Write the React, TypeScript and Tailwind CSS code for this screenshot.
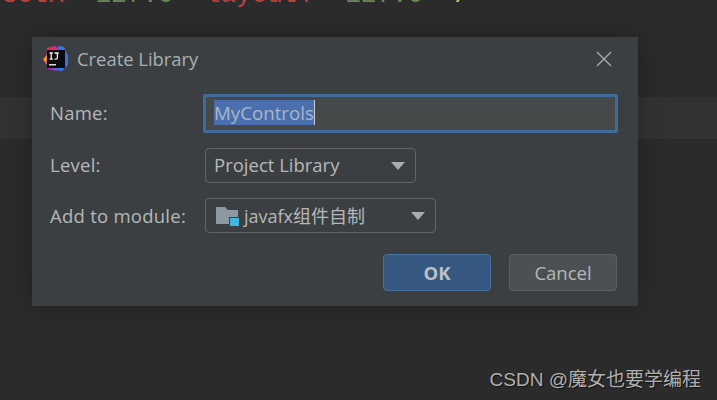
import { clsx } from "clsx";

const font = "[font-family:'Open_Sans','Noto_Sans_CJK_SC',sans-serif]";

function IdeaLogo() {
  return (
    <svg width="26" height="26" viewBox="0 0 26 26" className="shrink-0">
      <polygon points="4,2 12,0 17,4 8,22 4,21 3,13" fill="#e8256f" />
      <polygon points="0,13 4,9 6,16 3,18" fill="#f58a2b" />
      <polygon points="3,15 10,14 12,25 5,23" fill="#a82ba8" />
      <polygon points="15,0 21,1 25,10 25,19 19,25 11,24" fill="#3f6fe8" />
      <rect x="4" y="4" width="18" height="18" fill="#0b0b0b" />
      <rect x="6" y="18" width="7" height="1.5" fill="#d8d8d8" />
      <path d="M6.5 7h3.4M8.2 7v6.2M6.5 13.2h3.4" stroke="#f0f0f0" strokeWidth="1.3" fill="none" />
      <path d="M11.5 7h4.2M14.4 7v4.8q0 1.4-1.5 1.4h-1.4" stroke="#f0f0f0" strokeWidth="1.3" fill="none" />
    </svg>
  );
}

function Caret() {
  return (
    <svg width="14" height="8" viewBox="0 0 14 8" className="ml-auto shrink-0">
      <polygon points="0,0 14,0 7,8" fill="#a9adb0" />
    </svg>
  );
}

function ModuleIcon() {
  return (
    <svg width="23" height="20" viewBox="0 0 23 20" className="shrink-0">
      <path d="M0 1h9l3 3h10v14H0z" fill="#8c98a2" />
      <rect x="13" y="11" width="10" height="9" fill="#3c3f41" />
      <rect x="14" y="12" width="9" height="9" fill="#40b6e0" />
    </svg>
  );
}

function Row({ label, raised, children }: { label: string; raised?: boolean; children: React.ReactNode }) {
  return (
    <div className="flex items-center">
      <div className={clsx("w-[153px] shrink-0 whitespace-nowrap text-[18.5px] tracking-[0.25px] text-[#b4b8ba]", raised && "-translate-y-px")}>{label}</div>
      {children}
    </div>
  );
}

export default function App() {
  return (
    <div className={`relative h-[400px] w-[717px] overflow-hidden bg-[#2b2b2b] ${font}`}>
      <div className="-mt-[20px] h-[30px] whitespace-pre pl-[2px] [font-family:'Liberation_Mono',monospace] text-[26px] leading-[30px]">
        <span className="text-[#bc3f3c]">sotX=</span>
        <span className="text-[#6a8759]">"127.0"</span>
        <span> </span>
        <span className="text-[#bc3f3c]">layoutY=</span>
        <span className="text-[#6a8759]">"127.0"</span>
        <span> </span>
        <span className="text-[#e8bf6a]">/&gt;</span>
      </div>
      <div className="mt-[87px] h-[42px] bg-[#323232]" />

      <div className="absolute left-[32px] top-[37px] flex h-[269px] w-[606px] flex-col bg-[#3c3f41] shadow-[0_0_24px_rgba(0,0,0,0.25)]">
        <div className="flex h-[44px] items-center pl-[11px] pr-[26px]">
          <IdeaLogo />
          <span className="ml-[8px] text-[18.4px] text-[#a9b0b4]">Create Library</span>
          <svg width="16" height="16" viewBox="0 0 16 16" className="ml-auto">
            <path d="M1 1l14 14M15 1L1 15" stroke="#a8aaac" strokeWidth="1.4" />
          </svg>
        </div>

        <div className="mt-[13px] flex flex-col gap-[15px] pl-[18px]">
          <Row label="Name:" raised>
            <div className="flex h-[39px] w-[415px] items-center rounded-[2px] border-[3px] border-[#3f6a99] bg-[#45494a] pl-[8px]">
              <span className="-translate-y-px border-r border-[#c9ccce] bg-[#4b6eaf] text-[18.7px] leading-[25px] text-[#a9b7c6]">MyControls</span>
            </div>
          </Row>
          <Row label="Level:" raised>
            <div className="ml-[2px] flex h-[35px] w-[211px] items-center rounded-[4px] border border-[#646464] pl-[8px] pr-[10px] text-[18.5px] text-[#b4b8ba]">
              <span className="-translate-y-px">Project Library</span>
              <Caret />
            </div>
          </Row>
          <Row label="Add to module:">
            <div className="ml-[2px] flex h-[35px] w-[231px] items-center rounded-[4px] border border-[#646464] pl-[10px] pr-[10px] text-[18px] text-[#b4b8ba]">
              <ModuleIcon />
              <span className="ml-[5px] translate-y-px">javafx组件自制</span>
              <Caret />
            </div>
          </Row>
        </div>

        <div className="mt-[21px] flex justify-end gap-[18px] pr-[21px] text-[18.5px]">
          <button className="h-[37px] w-[108px] rounded-[4px] border border-[#47709c] bg-[#365880] font-bold text-[#bcc0c4]">OK</button>
          <button className="h-[37px] w-[108px] rounded-[4px] border border-[#5e6060] bg-[#4c5052] text-[#b4b8ba]">Cancel</button>
        </div>
      </div>

      <div className="absolute right-[16px] top-[367px] [font-family:'Liberation_Sans','Noto_Sans_CJK_SC',sans-serif] text-[19px] leading-[26px] text-[#b0b0b0] [text-shadow:1px_1px_1px_#111]">
        CSDN @魔女也要学编程
      </div>
    </div>
  );
}
